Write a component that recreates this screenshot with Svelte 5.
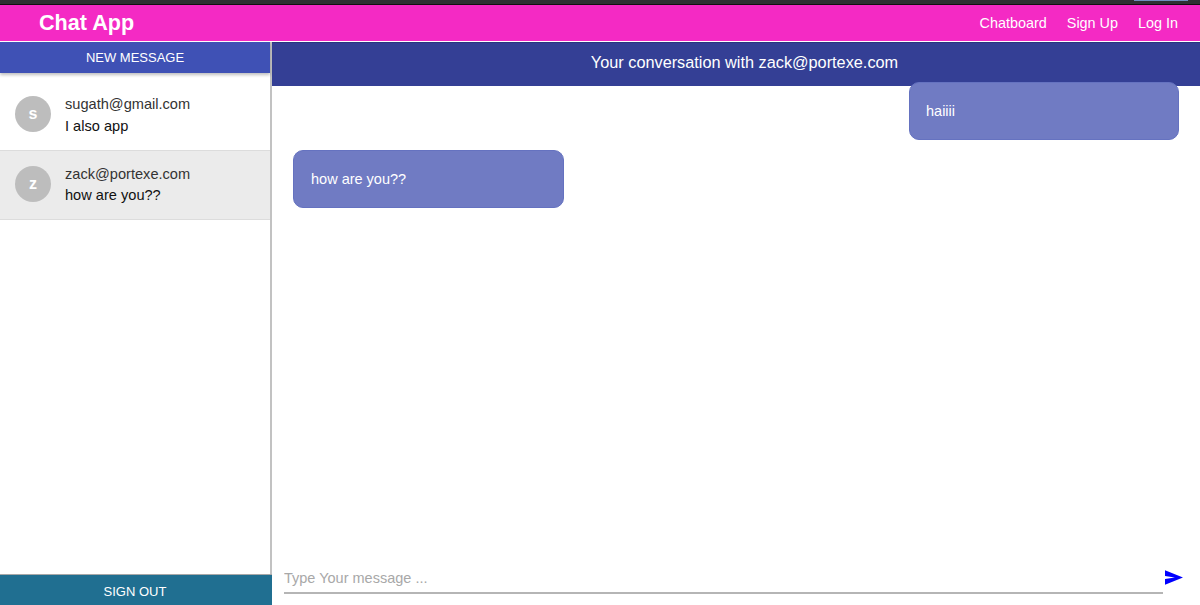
<script>
  const threads = [
    { initial: 's', email: 'sugath@gmail.com', last: 'I also app', active: false },
    { initial: 'z', email: 'zack@portexe.com', last: 'how are you??', active: true }
  ];
</script>

<div class="page">
  <div class="chrome"><span class="tab"></span><span class="tab-right"></span></div>
  <header class="nav">
    <h1>Chat App</h1>
    <nav>
      <a href="#a">Chatboard</a>
      <a href="#b">Sign Up</a>
      <a href="#c">Log In</a>
    </nav>
  </header>
  <main class="body">
    <aside class="side">
      <button class="new">NEW MESSAGE</button>
      <ul class="list">
        {#each threads as t}
          <li class:active={t.active}>
            <span class="avatar">{t.initial}</span>
            <div class="meta">
              <div>{t.email}</div>
              <div class="last">{t.last}</div>
            </div>
          </li>
        {/each}
      </ul>
      <button class="out">SIGN OUT</button>
    </aside>
    <section class="chat">
      <div class="head">Your conversation with zack@portexe.com</div>
      <div class="msgs">
        <div class="bubble me">haiiii</div>
        <div class="bubble them">how are you??</div>
      </div>
      <div class="compose">
        <input placeholder="Type Your message ..." />
        <svg class="send" viewBox="0 0 20 16" width="18" height="15" aria-hidden="true">
          <path d="M0 0 L20 8 L0 16 L0 9.6 L11 8 L0 6.4 Z" fill="#0000ff" />
        </svg>
      </div>
    </section>
  </main>
</div>

<style>
  :global(body) {
    margin: 0;
    font-family: "Liberation Sans", Arial, sans-serif;
    background: #fff;
  }
  .page {
    height: 605px;
    display: flex;
    flex-direction: column;
    overflow: hidden;
  }
  .chrome {
    height: 5px;
    flex: none;
    background: #2f3033;
    border-bottom: 1px solid #111;
    box-sizing: border-box;
    display: flex;
    justify-content: flex-end;
    padding-right: 12px;
  }
  .tab-right {
    width: 54px;
    height: 1px;
    background: #6f8fc0;
  }
  .nav {
    height: 36px;
    flex: none;
    background: #f42ac4;
    display: flex;
    align-items: center;
    justify-content: space-between;
    padding: 0 22px 0 39px;
    border-bottom: 1px solid #fff;
    box-sizing: content-box;
  }
  h1 {
    margin: 0;
    font-size: 21.6px;
    font-weight: 700;
    color: #fff;
  }
  nav {
    display: flex;
    gap: 20px;
  }
  nav a {
    color: #fff;
    text-decoration: none;
    font-size: 14.4px;
  }
  .body {
    flex: 1;
    min-height: 0;
    display: flex;
  }
  .side {
    width: 270px;
    flex: none;
    border-right: 2px solid #c2c2c2;
    box-sizing: content-box;
    display: flex;
    flex-direction: column;
    position: relative;
  }
  button {
    border: 0;
    color: #fff;
    font: inherit;
    font-size: 13px;
    width: 100%;
    flex: none;
  }
  .new {
    height: 31px;
    background: #3f51b5;
    box-shadow: 0 2px 3px rgba(0, 0, 0, 0.25);
    position: relative;
  }
  .out {
    height: 31px;
    padding: 3px 2px 0 0;
    background: #206f91;
    width: 272px;
    margin-right: -2px;
    border-top: 1px solid #a8a8a8;
    position: relative;
  }
  .list {
    flex: 1;
    list-style: none;
    margin: 0;
    padding: 8px 0 0;
  }
  li {
    height: 69px;
    display: flex;
    align-items: center;
    gap: 14px;
    padding-left: 15px;
    box-sizing: content-box;
    font-size: 14.6px;
    color: #333;
    border-bottom: 1px solid #dcdcdc;
  }
  li:first-child {
    border-bottom: 0;
  }
  li.active {
    background: #ebebeb;
    border-top: 1px solid #dcdcdc;
    height: 68px;
  }
  .avatar {
    width: 36px;
    height: 36px;
    border-radius: 50%;
    background: #bdbdbd;
    color: #fff;
    display: flex;
    align-items: center;
    justify-content: center;
    font-size: 16px;
    font-weight: 700;
    flex: none;
    margin-top: -3px;
  }
  .meta {
    line-height: 21.5px;
  }
  .last {
    color: #111;
  }
  .chat {
    flex: 1;
    min-width: 0;
    display: flex;
    flex-direction: column;
  }
  .head {
    height: 44px;
    flex: none;
    background: #343f95;
    color: #fff;
    font-size: 16.3px;
    display: flex;
    align-items: center;
    justify-content: center;
    border-top: 1px solid #2b357f;
    box-sizing: border-box;
    padding: 0 0 5px 17px;
  }
  .msgs {
    flex: 1;
    display: flex;
    flex-direction: column;
    gap: 10px;
    margin-top: -4px;
    padding: 0 21px;
    position: relative;
  }
  .bubble {
    width: 271px;
    height: 58px;
    box-sizing: border-box;
    background: #707bc3;
    border: 1px solid #6572c0;
    border-radius: 10px;
    color: #fff;
    font-size: 14.5px;
    display: flex;
    align-items: center;
    padding-left: 17px;
  }
  .me {
    align-self: flex-end;
    width: 270px;
    padding-left: 16px;
  }
  .compose {
    flex: none;
    display: flex;
    align-items: flex-start;
    padding: 0 17px 11px 12px;
    height: 30px;
    box-sizing: content-box;
  }
  input {
    flex: 1;
    height: 30px;
    min-width: 0;
    box-sizing: border-box;
    border: 0;
    border-bottom: 2px solid #b5b5b5;
    padding: 0;
    outline: 0;
    font: inherit;
    font-size: 14.5px;
  }
  input::placeholder {
    color: #a8a8a8;
  }
  .send {
    margin: 6px 0 0 2px;
    flex: none;
  }
</style>
